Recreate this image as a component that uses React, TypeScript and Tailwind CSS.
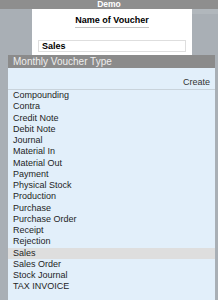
import React from "react";

const items = [
  "Compounding",
  "Contra",
  "Credit Note",
  "Debit Note",
  "Journal",
  "Material In",
  "Material Out",
  "Payment",
  "Physical Stock",
  "Production",
  "Purchase",
  "Purchase Order",
  "Receipt",
  "Rejection",
  "Sales",
  "Sales Order",
  "Stock Journal",
  "TAX INVOICE",
];

export default function App() {
  return (
    <div
      className="relative w-[218px] h-[300px] overflow-hidden bg-[#a9afb5]"
      style={{ fontFamily: '"Liberation Sans", Arial, sans-serif' }}
    >
      <div className="h-[9px] bg-[#8e8e8e] text-white font-bold text-[8.5px] leading-[9px] text-center">
        Demo
      </div>
      <div className="flex">
        <div className="w-[32px]" />
        <div className="w-[160px] h-[46px] bg-white flex flex-col items-center">
          <div className="mt-[6px] text-[9px] leading-[10px] font-bold text-black pb-[2px] border-b border-[#c4c4c4]">
            Name of Voucher
          </div>
          <div className="mt-[12px] w-[148px] h-[12px] border border-[#dedede] bg-white flex items-center pl-[3px] text-[9px] font-bold text-black leading-[10px]">
            Sales
          </div>
        </div>
        <div className="flex-1 flex flex-col">
          <div className="h-[5px] bg-[#b1b7bc]" />
        </div>
      </div>
      <div className="absolute left-[8px] top-[55px] w-[207px] bottom-0 flex flex-col bg-[#e2effa]">
        <div className="h-[13px] bg-[#8b8b8b] text-[#eeeeee] text-[10px] leading-[13px] pl-[5px]">
          Monthly Voucher Type
        </div>
        <div className="h-[22px] border-b border-[#c9d3db] flex items-end justify-end pr-[5px] pb-[1px] text-[9px] leading-[11px] text-[#333333]">
          Create
        </div>
        <div className="flex flex-col">
          {items.map((it) => (
            <div
              key={it}
              className={
                it === "Sales"
                  ? "h-[11.25px] leading-[11.25px] pl-[5px] text-[9px] text-[#1e1e1e] bg-[#dedede]"
                  : "h-[11.25px] leading-[11.25px] pl-[5px] text-[9px] text-[#1e1e1e]"
              }
            >
              {it}
            </div>
          ))}
        </div>
      </div>
    </div>
  );
}
